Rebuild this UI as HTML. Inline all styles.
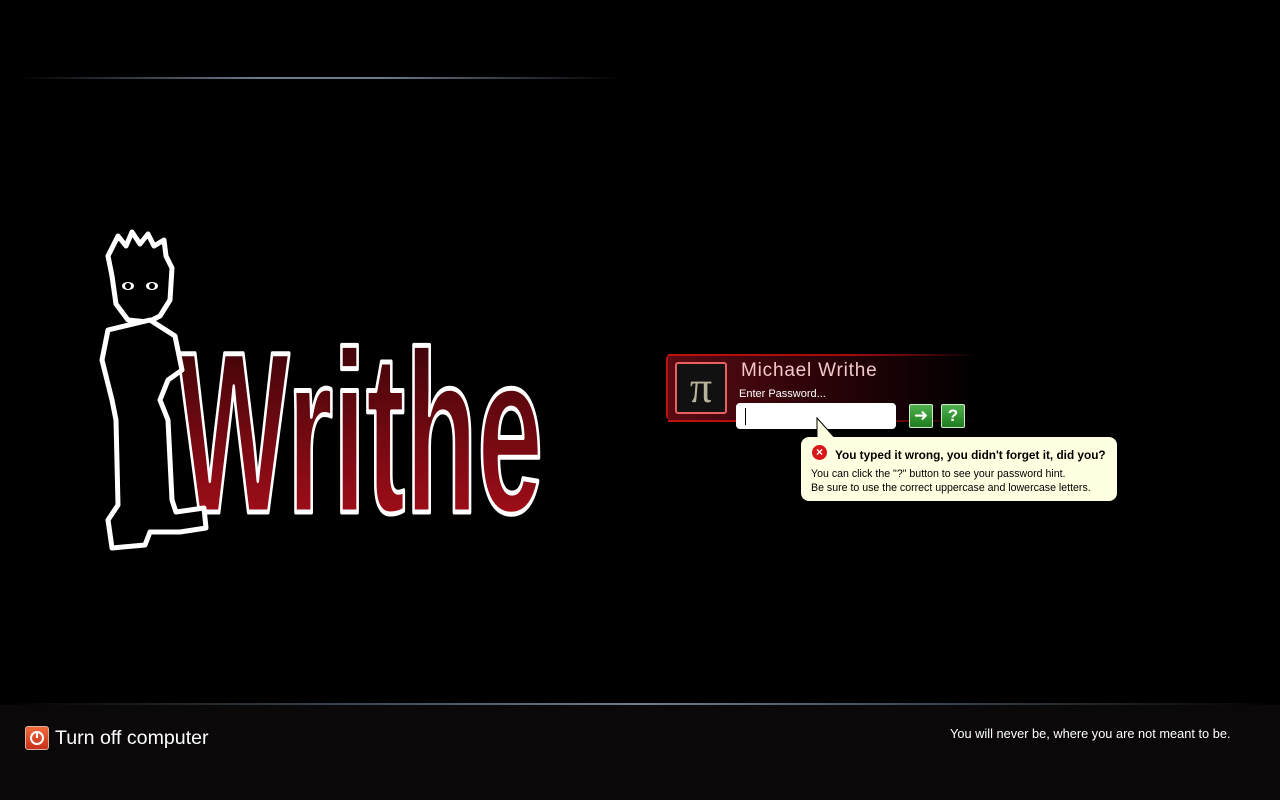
<!DOCTYPE html>
<html><head><meta charset="utf-8"><style>
body{margin:0;width:1280px;height:800px;background:#000;position:relative;overflow:hidden;font-family:"Liberation Sans","DejaVu Sans",sans-serif}
.topline{position:absolute;left:20px;top:77px;width:600px;height:2px;background:linear-gradient(90deg,rgba(90,110,130,0),#6a7c8e 40%,#6a7c8e 60%,rgba(90,110,130,0))}
.footer{position:absolute;left:0;top:705px;width:1280px;height:95px;background:#0a0808}
.fline{position:absolute;left:0;top:703px;width:1280px;height:2px;background:linear-gradient(90deg,rgba(80,95,110,0),#6d7f91 50%,rgba(80,95,110,0))}
.panel{position:absolute;left:666px;top:354px;width:310px;height:66px;border-left:2px solid #c01010;border-radius:5px 0 0 5px;background:linear-gradient(90deg,#5a0a12,#2a0308 50%,#000);}
.hb{position:absolute;left:668px;width:310px;height:2px;background:linear-gradient(90deg,#c01010,#a00c0c 60%,rgba(160,12,12,0))}
.avatar{position:absolute;left:675px;top:362px;width:48px;height:48px;border:2px solid #e86060;border-radius:3px;background:#111;color:#b8b49a;font:44px/48px "Liberation Serif",serif;text-align:center}
.name{position:absolute;left:741px;top:360px;color:#f3c8c8;font-size:19px;letter-spacing:.8px}
.ep{position:absolute;left:739px;top:388px;color:#fff;font-size:11px}
.input{position:absolute;left:736px;top:403px;width:160px;height:26px;background:#fff;border-radius:4px}
.caret{position:absolute;left:745px;top:408px;width:1px;height:17px;background:#000}
.btn{position:absolute;top:404px;width:22px;height:22px;border:1px solid #cfe8cf;border-radius:2px;background:linear-gradient(#4fb04f,#1e7d1e);color:#fff;font-weight:bold;text-align:center;line-height:22px;font-size:17px}
.tip{position:absolute;left:801px;top:437px;width:316px;height:64px;background:#ffffe1;border-radius:8px}
.tipt{position:absolute;left:835px;top:448px;font-size:11.8px;font-weight:bold;color:#000}
.tipb{position:absolute;left:811px;top:467px;font-size:10.6px;line-height:14px;color:#000}
.err{position:absolute;left:812px;top:445px;width:15px;height:15px;border-radius:50%;background:#d81818;color:#fff;font-size:12px;line-height:15px;text-align:center;font-weight:bold}
.power{position:absolute;left:25px;top:726px;width:22px;height:22px;border:1px solid #d9b0a0;border-radius:3px;background:linear-gradient(#f06a3a,#c8301a)}
.turn{position:absolute;left:55px;top:727px;color:#fff;font-size:19.6px}
.quote{position:absolute;left:950px;top:726px;color:#fff;font-size:12.8px}
</style></head><body>
<div class="topline"></div>
<svg style="position:absolute;left:0;top:0" width="600" height="600">
<defs><linearGradient id="rg" x1="0" y1="0" x2="0" y2="1"><stop offset="0" stop-color="#2a0206"/><stop offset="1" stop-color="#b8101c"/></linearGradient></defs>
<text x="178" y="512" font-family="Liberation Sans Narrow, Liberation Sans, sans-serif" font-weight="bold" font-size="230" textLength="365" lengthAdjust="spacingAndGlyphs" fill="url(#rg)" stroke="#fff" stroke-width="5" stroke-linejoin="round">Writhe</text>
<g fill="#000" stroke="#fff" stroke-width="5" stroke-linejoin="round">
<path d="M118 236 L126 246 L132 232 L140 244 L148 234 L154 246 L164 240 L166 256 L172 268 L170 300 L160 316 L148 322 L128 320 L116 304 L112 276 L108 256 Z"/>
<path d="M108 330 L150 320 L175 336 L182 370 L168 380 L160 400 L168 420 L172 500 L176 512 L204 508 L206 528 L180 532 L150 532 L145 545 L112 548 L108 520 L118 505 L116 420 L112 400 L102 360 Z"/>
</g>
<g fill="#fff"><ellipse cx="128" cy="286" rx="6" ry="4"/><ellipse cx="152" cy="286" rx="6" ry="4"/></g>
<g fill="#000"><circle cx="128" cy="286" r="3"/><circle cx="152" cy="286" r="3"/></g>
</svg>
<div class="panel"></div>
<div class="hb" style="top:354px"></div><div class="hb" style="top:420px"></div>
<div class="avatar">π</div>
<div class="name">Michael Writhe</div>
<div class="ep">Enter Password...</div>
<div class="input"></div><div class="caret"></div>
<div class="btn" style="left:909px">➜</div>
<div class="btn" style="left:941px">?</div>
<svg style="position:absolute;left:815px;top:416px" width="30" height="24"><path d="M2 2 L20 22 L2 22 Z" fill="#ffffe1" stroke="#000" stroke-width="1"/><rect x="2" y="21" width="24" height="3" fill="#ffffe1"/></svg>
<div class="tip"></div>
<div class="err">×</div>
<div class="tipt">You typed it wrong, you didn't forget it, did you?</div>
<div class="tipb">You can click the "?" button to see your password hint.<br>Be sure to use the correct uppercase and lowercase letters.</div>
<div class="fline"></div>
<div class="footer"></div>
<div class="power"><svg width="22" height="22"><circle cx="11" cy="11" r="6" fill="none" stroke="#fff" stroke-width="2"/><line x1="11" y1="5" x2="11" y2="11" stroke="#fff" stroke-width="2"/></svg></div>
<div class="turn">Turn off computer</div>
<div class="quote">You will never be, where you are not meant to be.</div>
</body></html>
